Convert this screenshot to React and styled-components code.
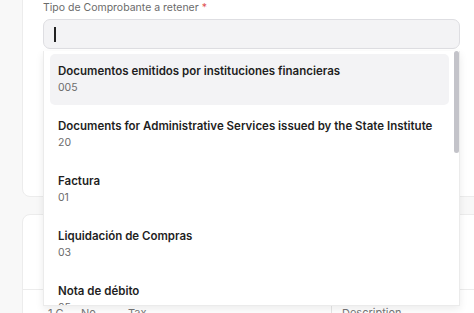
import React from "react";
import styled, { createGlobalStyle } from "styled-components";

const Global = createGlobalStyle`
  html, body { margin: 0; padding: 0; }
  body {
    background: #f8f8f8;
    font-family: Inter, "Noto Sans", "Liberation Sans", sans-serif;
    width: 474px;
    height: 313px;
    overflow: hidden;
  }
`;

const Page = styled.div`
  position: relative;
  padding-left: 22px;
  height: 313px;
  overflow: hidden;
`;

const Card = styled.div`
  background: #ffffff;
  border: 1px solid #ececec;
  border-radius: 8px;
  width: 480px;
  box-sizing: border-box;
  margin-top: ${(p) => p.$mt || 0}px;
  height: ${(p) => p.$h}px;
  padding: ${(p) => p.$pad || "0"};
`;

const Label = styled.div`
  font-size: 10.5px;
  line-height: 14px;
  color: #6b6b6b;
  margin-bottom: 4px;
  span { color: #e05252; }
`;

const Input = styled.div`
  width: 417px;
  height: 30px;
  box-sizing: border-box;
  background: #f3f3f5;
  border: 1px solid #dedee2;
  border-radius: 7px;
  display: flex;
  align-items: center;
  padding-left: 10px;
`;

const Caret = styled.div`
  width: 1.5px;
  height: 15px;
  background: #222;
`;

const TableHead = styled.div`
  height: 100%;
  padding-top: 74px;
  box-sizing: border-box;
`;

const HeadRow = styled.div`
  display: flex;
  width: 100%;
  border-top: 1px solid #ececec;
  padding: 16px 0 0 25px;
  box-sizing: border-box;
  font-size: 11px;
  line-height: 14px;
  color: #777;
`;

const HeadCell = styled.div`
  width: ${(p) => p.$w}px;
  box-sizing: border-box;
  padding-left: ${(p) => (p.$sep ? 10 : 0)}px;
  border-left: ${(p) => (p.$sep ? "1px solid #e6e6e6" : "none")};
`;

const Popup = styled.div`
  position: absolute;
  left: 43px;
  top: 51px;
  width: 417px;
  height: 255px;
  background: #fff;
  border: 1px solid #ebebeb;
  border-top: 0;
  box-sizing: border-box;
  box-shadow: 0 3px 8px rgba(0, 0, 0, 0.08);
  overflow: hidden;
  padding: 3px 10px 4px 6px;
`;

const Thumb = styled.div`
  position: absolute;
  top: 0;
  right: 0;
  width: 5px;
  height: 102px;
  background: #c3c3c9;
  border-radius: 3px;
`;

const Item = styled.div`
  height: 51px;
  box-sizing: border-box;
  margin-bottom: 4px;
  padding: 9px 8px 0 8px;
  border-radius: 5px;
  background: ${(p) => (p.$active ? "#f3f3f5" : "transparent")};
`;

const Title = styled.div`
  font-size: 11.5px;
  font-weight: 600;
  line-height: 16px;
  color: #1f1f1f;
  white-space: nowrap;
`;

const Sub = styled.div`
  font-size: 10.5px;
  line-height: 18px;
  color: #6b6b6b;
`;

const options = [
  ["Documentos emitidos por instituciones financieras", "005"],
  ["Documents for Administrative Services issued by the State Institute", "20"],
  ["Factura", "01"],
  ["Liquidación de Compras", "03"],
  ["Nota de débito", "05"],
];

export default function App() {
  return (
    <>
      <Global />
      <Page>
        <Card $mt={-10} $h={207} $pad="10px 0 0 20px">
          <Label>
            Tipo de Comprobante a retener <span>*</span>
          </Label>
          <Input>
            <Caret />
          </Input>
        </Card>
        <Card $mt={17} $h={120}>
          <TableHead>
            <HeadRow>
              <HeadCell $w={33}>1 C.</HeadCell>
              <HeadCell $w={47}>No.</HeadCell>
              <HeadCell $w={203}>Tax</HeadCell>
              <HeadCell $w={130} $sep>
                Description
              </HeadCell>
            </HeadRow>
          </TableHead>
        </Card>
        <Popup>
          {options.map(([t, c], i) => (
            <Item key={c} $active={i === 0}>
              <Title>{t}</Title>
              <Sub>{c}</Sub>
            </Item>
          ))}
          <Thumb />
        </Popup>
      </Page>
    </>
  );
}
